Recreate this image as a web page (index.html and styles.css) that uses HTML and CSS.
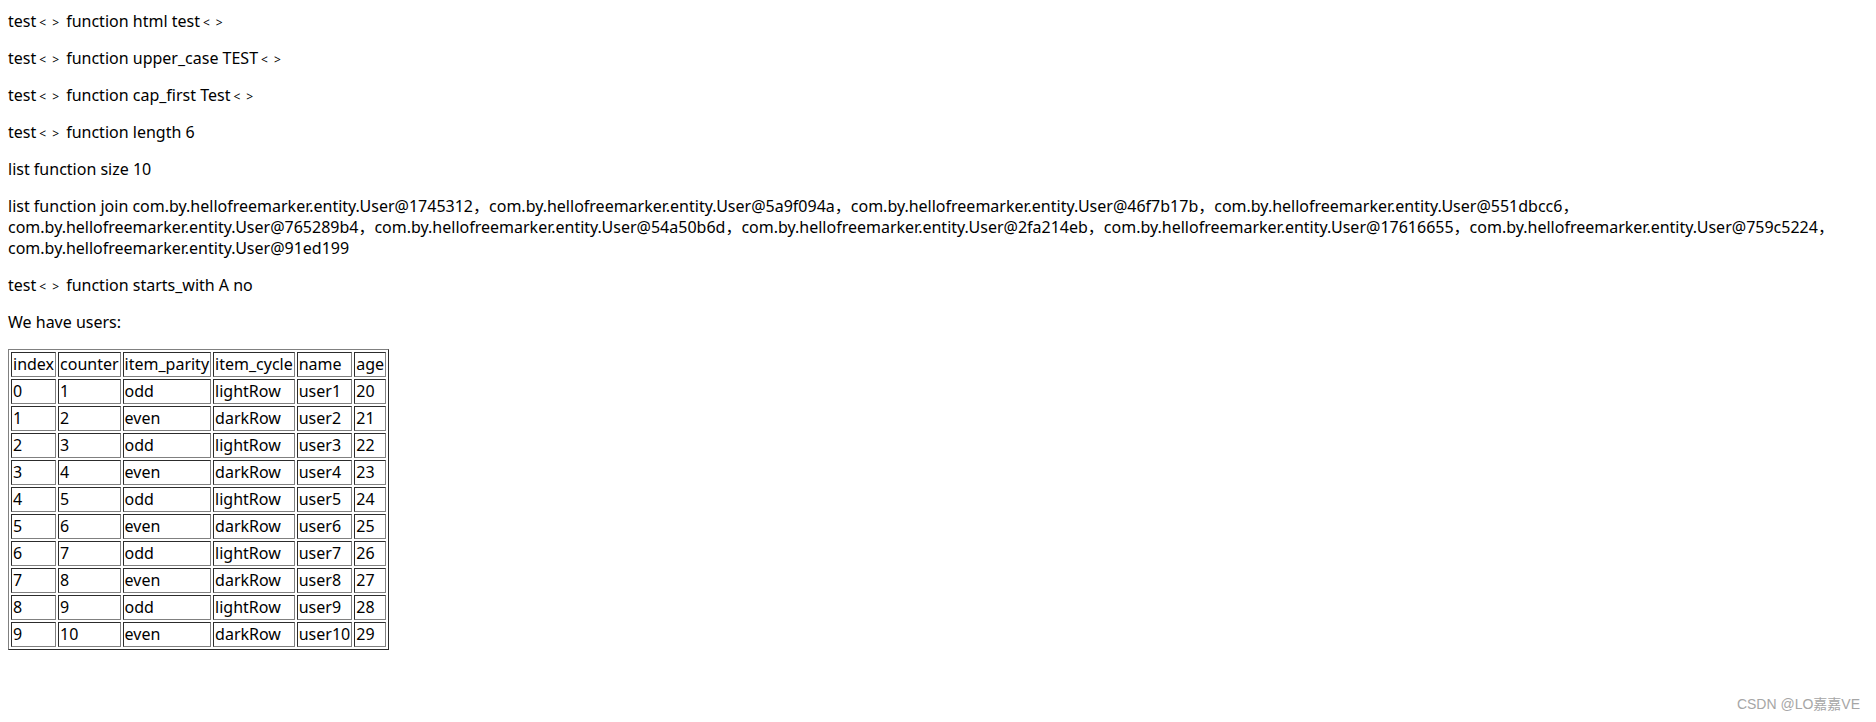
FILE: index.html
```html
<!DOCTYPE html>
<html>
<head>
<meta charset="utf-8">
<link rel="stylesheet" href="styles.css">
</head>
<body>
<div class="page">
<p>test<span class="ang">&lt;</span><span class="ang">&gt;</span> function html test<span class="ang">&lt;</span><span class="ang">&gt;</span></p>
<p>test<span class="ang">&lt;</span><span class="ang">&gt;</span> function upper_case TEST<span class="ang">&lt;</span><span class="ang">&gt;</span></p>
<p>test<span class="ang">&lt;</span><span class="ang">&gt;</span> function cap_first Test<span class="ang">&lt;</span><span class="ang">&gt;</span></p>
<p>test<span class="ang">&lt;</span><span class="ang">&gt;</span> function length 6</p>
<p>list function size 10</p>
<p>list function join com.by.hellofreemarker.entity.User@1745312，com.by.hellofreemarker.entity.User@5a9f094a，com.by.hellofreemarker.entity.User@46f7b17b，com.by.hellofreemarker.entity.User@551dbcc6，com.by.hellofreemarker.entity.User@765289b4，com.by.hellofreemarker.entity.User@54a50b6d，com.by.hellofreemarker.entity.User@2fa214eb，com.by.hellofreemarker.entity.User@17616655，com.by.hellofreemarker.entity.User@759c5224，com.by.hellofreemarker.entity.User@91ed199</p>
<p>test<span class="ang">&lt;</span><span class="ang">&gt;</span> function starts_with A no</p>
<p>We have users:</p>
<table class="users">
<tr><td>index</td><td>counter</td><td>item_parity</td><td>item_cycle</td><td>name</td><td>age</td></tr>
<tr><td>0</td><td>1</td><td>odd</td><td>lightRow</td><td>user1</td><td>20</td></tr>
<tr><td>1</td><td>2</td><td>even</td><td>darkRow</td><td>user2</td><td>21</td></tr>
<tr><td>2</td><td>3</td><td>odd</td><td>lightRow</td><td>user3</td><td>22</td></tr>
<tr><td>3</td><td>4</td><td>even</td><td>darkRow</td><td>user4</td><td>23</td></tr>
<tr><td>4</td><td>5</td><td>odd</td><td>lightRow</td><td>user5</td><td>24</td></tr>
<tr><td>5</td><td>6</td><td>even</td><td>darkRow</td><td>user6</td><td>25</td></tr>
<tr><td>6</td><td>7</td><td>odd</td><td>lightRow</td><td>user7</td><td>26</td></tr>
<tr><td>7</td><td>8</td><td>even</td><td>darkRow</td><td>user8</td><td>27</td></tr>
<tr><td>8</td><td>9</td><td>odd</td><td>lightRow</td><td>user9</td><td>28</td></tr>
<tr><td>9</td><td>10</td><td>even</td><td>darkRow</td><td>user10</td><td>29</td></tr>
</table>
</div>
<div class="watermark">CSDN @LO嘉嘉VE</div>
</body>
</html>
```
FILE: styles.css
```css
html, body {
  margin: 0;
  padding: 0;
  background: #ffffff;
}
body {
  font-family: "Noto Sans", "Noto Sans CJK SC", sans-serif;
  font-size: 16px;
  line-height: 21px;
  color: #000000;
  height: 722px;
  position: relative;
  overflow: hidden;
}
.page {
  padding: 0 8px;
}
.page p {
  margin: 16px 0;
}
.page p:first-child {
  margin-top: 11px;
}
.ang {
  font-size: 12px;
  line-height: 0;
  padding: 0 3px;
}
.users {
  border: 1px outset gray;
  border-spacing: 2px;
  border-collapse: separate;
}
.users td {
  border: 1px inset gray;
  padding: 1px;
  line-height: 21px;
  white-space: nowrap;
}
.watermark {
  position: absolute;
  right: 16px;
  bottom: 10px;
  font-family: "Liberation Sans", "Noto Sans CJK SC", sans-serif;
  font-size: 14px;
  line-height: 16px;
  color: #a6a6a6;
}
```
